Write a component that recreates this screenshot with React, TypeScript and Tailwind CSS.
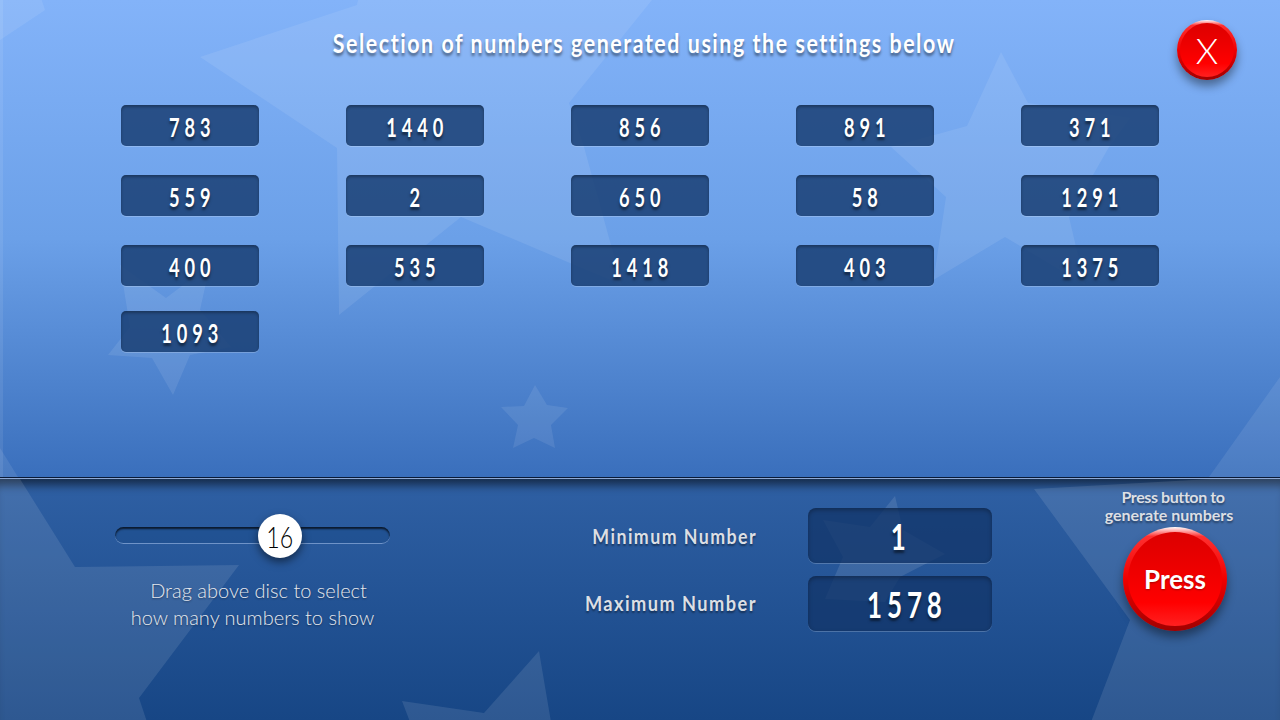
import React from "react";

const numbers = [783, 1440, 856, 891, 371, 559, 2, 650, 58, 1291, 400, 535, 1418, 403, 1375];

const NumberChip: React.FC<{ value: number }> = ({ value }) => (
  <div className="flex h-[41px] w-[138px] items-center justify-center rounded-[5px] bg-[#1a4074]/85 shadow-[inset_0_2px_3px_rgba(0,0,0,0.3),0_1px_0_rgba(255,255,255,0.2)]">
    <span className="mt-[3px] inline-block scale-x-[0.7] pl-[6px] text-[26px] font-bold leading-none tracking-[7px] text-white [text-shadow:0_3px_3px_rgba(0,0,0,0.5)]">
      {value}
    </span>
  </div>
);

const ValueBox: React.FC<{ value: number; offset: string }> = ({ value, offset }) => (
  <div className="flex h-[55px] w-[184px] items-center justify-center rounded-[8px] bg-[#123468]/75 shadow-[inset_0_2px_4px_rgba(0,0,0,0.3),0_1px_0_rgba(255,255,255,0.2)]">
    <span className={`inline-block scale-x-[0.7] text-[37px] font-bold leading-none tracking-[7px] text-white [text-shadow:0_3px_3px_rgba(0,0,0,0.5)] ${offset}`}>
      {value}
    </span>
  </div>
);

const RedButton: React.FC<{ className: string; children: React.ReactNode }> = ({ className, children }) => (
  <div className={`rounded-full bg-[linear-gradient(#ffffff_0%,#ff3030_9%,#f00000_50%,#a00000_100%)] shadow-[0_6px_10px_rgba(0,0,0,0.4)] ${className}`}>
    <div className="flex h-full w-full items-center justify-center rounded-full bg-[linear-gradient(#dc0000_0%,#f00000_45%,#ff0000_75%,#ff2020_100%)]">
      {children}
    </div>
  </div>
);

const TopStars = () => (
  <svg className="absolute inset-0" width="1280" height="477" viewBox="0 0 1280 477">
    <g fill="#ffffff" fillOpacity="0.085">
      <polygon points="0,-5 40,-5 45,10 0,40" />
      <polygon points="200,57 357,5 360,-10 660,-10 569,103 584,147 622,285 461,217 339,315 337,148" />
      <polygon points="1001,52 1028,103 1130,118 1109,147 1069,217 1085,285 1005,237 925,285 934,277 946,197 891,147 967,126" />
      <polygon points="120,265 166,298 210,265 200,310 231,347 190,355 173,395 152,358 108,355 130,327" />
      <polygon points="535,385 547,405 568,408 551,425 555,448 534,438 513,448 518,425 501,407 524,406" />
      <polygon points="0,448 18,477 0,477" />
      <polygon points="1280,377 1209,477 1280,477" />
    </g>
  </svg>
);

const BottomStars = () => (
  <svg className="absolute inset-0" width="1280" height="243" viewBox="0 477 1280 243">
    <g fill="#ffffff" fillOpacity="0.1">
      <polygon points="0,477 20,477 75,565 239,563 139,696 147,720 0,720" />
      <polygon points="539,649 551,720 410,720 402,699 484,711" />
      <polygon points="895,494 903,528 945,552 900,575 885,600 825,597 843,555 823,518 870,525" />
      <polygon points="1034,487 1210,477 1280,477 1280,720 1091,720 1130,618" />
    </g>
  </svg>
);

export default function App() {
  return (
    <div className="flex h-[720px] w-[1280px] flex-col overflow-hidden [font-family:'Lato',sans-serif]">
      <div className="relative h-[477px] bg-[linear-gradient(#83b3f9_0%,#6ba0e8_50%,#3a6fbc_100%)] shadow-[inset_3px_0_0_rgba(255,255,255,0.08)]">
        <TopStars />
        <div className="relative flex flex-col items-center">
          <h1 className="ml-[9px] mt-[25px] h-[36px] scale-x-[0.79] whitespace-nowrap text-[27px] font-bold leading-[36px] tracking-[2px] text-white [text-shadow:0_3px_3px_rgba(0,0,0,0.45)]">
            Selection of numbers generated using the settings below
          </h1>
          <div className="mt-[44px] grid grid-cols-[repeat(5,138px)] gap-x-[87px] gap-y-[29px]">
            {numbers.map((n) => (
              <NumberChip key={n} value={n} />
            ))}
          </div>
          <div className="mt-[25px] w-[1038px]">
            <NumberChip value={1093} />
          </div>
        </div>
        <RedButton className="absolute left-[1177px] top-[20px] h-[60px] w-[60px] p-[3px]">
          <span className="text-[36px] font-light leading-none text-white">X</span>
        </RedButton>
      </div>

      <div className="h-[2px] border-t border-[#0a1a36] bg-[#8fa9d4]" />

      <div className="relative flex h-[241px] items-start bg-[linear-gradient(#2f60a4_0%,#174685_100%)] shadow-[inset_0_12px_10px_-6px_rgba(0,0,0,0.55)]">
        <BottomStars />

        <div className="relative ml-[115px] mt-[48px] w-[275px]">
          <div className="h-[17px] rounded-full border-b border-[#6f93c8] bg-[#1d4c8c]/60 shadow-[inset_0_2px_2px_rgba(0,0,0,0.7)]" />
          <div className="absolute left-[143px] top-[-13px] flex h-[44px] w-[44px] items-center justify-center rounded-full bg-white shadow-[0_4px_8px_rgba(0,0,0,0.5)]">
            <span className="inline-block scale-x-[0.8] text-[29px] font-light leading-none text-black">16</span>
          </div>
          <p className="mt-[33px] text-center text-[20px] font-light leading-[27px] text-[#e4e8ef] [text-shadow:0_1px_2px_rgba(0,0,0,0.4)]">
            <span className="pl-[12px]">Drag above disc to select</span>
            <br />
            how many numbers to show
          </p>
        </div>

        <div className="relative mt-[29px] grid grid-cols-[367px_184px] items-center gap-x-[51px] gap-y-[13px]">
          <span className="origin-right scale-x-[0.89] text-right text-[20px] font-bold tracking-[1.6px] text-[#dcdfe4] [text-shadow:0_2px_2px_rgba(0,0,0,0.4)]">
            Minimum Number
          </span>
          <ValueBox value={1} offset="pl-[3px]" />
          <span className="mb-[2px] origin-right scale-x-[0.91] text-right text-[20px] font-bold tracking-[1.6px] text-[#dcdfe4] [text-shadow:0_2px_2px_rgba(0,0,0,0.4)]">
            Maximum Number
          </span>
          <ValueBox value={1578} offset="pl-[20px]" />
        </div>

        <div className="relative ml-[112px] mt-[9px] flex w-[130px] flex-col items-center">
          <p className="text-center text-[16px] font-bold leading-[18px] text-[#dcdfe4] [text-shadow:0_2px_2px_rgba(0,0,0,0.4)]">
            <span className="pl-[8px] tracking-[-0.4px]">Press button to</span>
            <br />
            generate numbers
          </p>
          <RedButton className="ml-[12px] mt-[3px] h-[104px] w-[104px] p-[5px]">
            <span className="text-[26px] font-bold leading-none text-white [text-shadow:0_1px_2px_rgba(0,0,0,0.3)]">
              Press
            </span>
          </RedButton>
        </div>
      </div>
    </div>
  );
}
